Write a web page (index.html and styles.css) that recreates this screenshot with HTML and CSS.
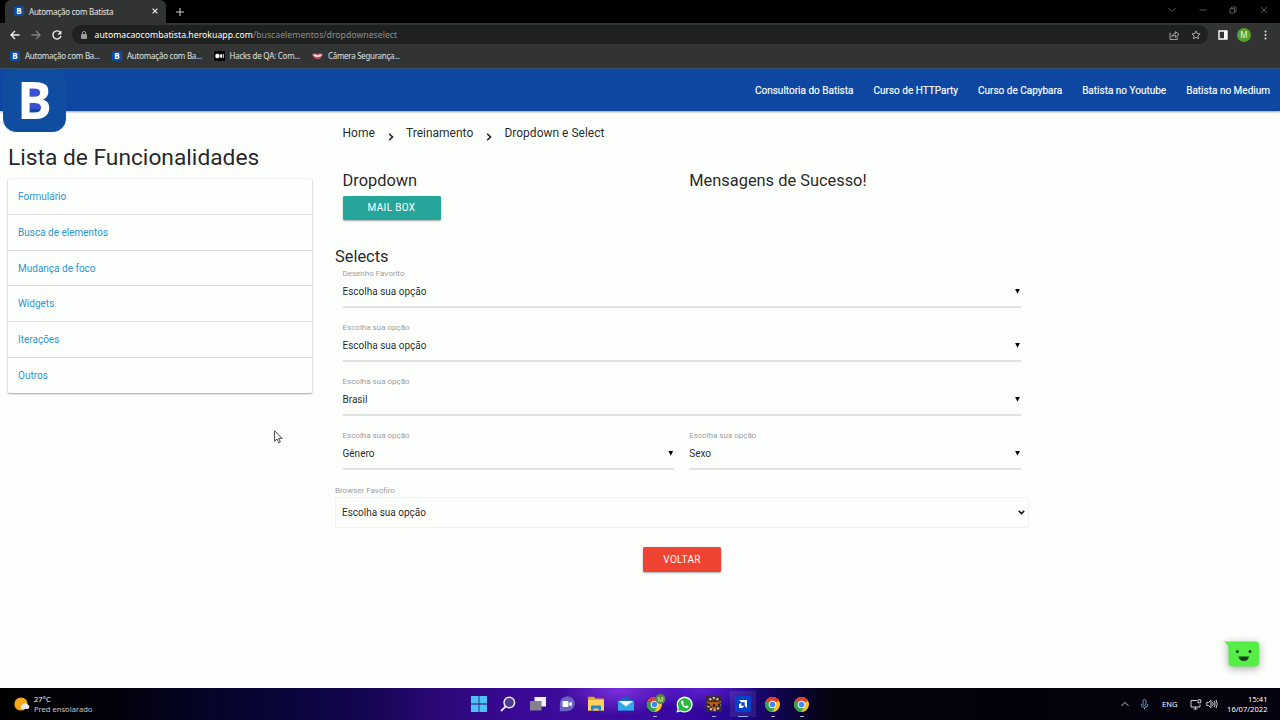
FILE: index.html
```html
<!DOCTYPE html>
<html lang="pt-BR">
<head>
<meta charset="utf-8">
<title>Automação com Batista</title>
<link rel="stylesheet" href="styles.css">
</head>
<body>
<svg class="defs" width="0" height="0">
  <symbol id="chrome" viewBox="0 0 16 16">
    <circle cx="8" cy="8" r="8" fill="#fbc31c"/>
    <path d="M8 8 1.1 4A8 8 0 0 1 14.9 4Z" fill="#e2412f"/>
    <path d="M1.1 4A8 8 0 0 0 7.6 16L11.4 10 8 8Z" fill="#31a350"/>
    <path d="M1.1 4 4.8 10 8 8 8 4.2Z" fill="#31a350"/>
    <path d="M1.1 4A8 8 0 0 1 14.9 4L8 4.2 4.6 6.3Z" fill="#e2412f"/>
    <circle cx="8" cy="8" r="4" fill="#fff"/>
    <circle cx="8" cy="8" r="3" fill="#4285f4"/>
  </symbol>
</svg>

<header class="tabs">
  <div class="tab">
    <span class="fav">B</span>
    <span class="tab-title">Automação com Batista</span>
    <svg width="6" height="6" viewBox="0 0 6 6" stroke="#e8e8e8" stroke-width="1.2"><path d="M.6.6l4.8 4.8M5.4.6L.6 5.4"/></svg>
  </div>
  <svg class="plus" width="8" height="8" viewBox="0 0 8 8" stroke="#c8c8c8" stroke-width="1.1"><path d="M4 0v8M0 4h8"/></svg>
  <div class="window-controls">
    <svg width="8" height="8" viewBox="0 0 8 8"><path d="M.5 2 4 5.6 7.5 2"/></svg>
    <svg width="8" height="8" viewBox="0 0 8 8"><path d="M.5 4h7"/></svg>
    <svg width="8" height="8" viewBox="0 0 8 8"><path d="M1 2.5h4.5V7H1zM2.5 2.5V1H7v4.5H5.5"/></svg>
    <svg width="8" height="8" viewBox="0 0 8 8"><path d="M1 1l6 6M7 1 1 7"/></svg>
  </div>
</header>

<div class="toolbar">
  <svg width="10" height="10" viewBox="0 0 10 10" class="nav-ic"><path d="M9.6 5H1.2M5 1 1 5l4 4"/></svg>
  <svg width="10" height="10" viewBox="0 0 10 10" class="nav-ic dim"><path d="M.4 5h8.4M5 1l4 4-4 4"/></svg>
  <svg width="10" height="10" viewBox="0 0 10 10" class="nav-ic"><path d="M8.3 2.4A4.1 4.1 0 1 0 9 6"/><path d="M9.4.4v4H5.4z" fill="#f0f0f0" stroke="none"/></svg>
  <div class="address">
    <svg width="6" height="8" viewBox="0 0 6 8"><rect y="3" width="6" height="5" rx=".8" fill="#9a9d9b"/><path d="M1.4 3.2V2a1.6 1.6 0 0 1 3.2 0v1.2" fill="none" stroke="#9a9d9b"/></svg>
    <span class="url"><span class="host">automacaocombatista.herokuapp.com</span><span class="path">/buscaelementos/dropdowneselect</span></span>
    <svg width="11" height="10" viewBox="0 0 11 10" class="thin"><path d="M1 2.6V9.4h7.4V7.6M2.8 6.8C3 4.6 4.6 3.6 6.6 3.6V1.6L10 4.6 6.6 7.4V5.4C5 5.4 3.8 5.6 2.8 6.8Z"/></svg>
    <svg width="10" height="10" viewBox="0 0 10 10" class="thin star"><path d="M5 .9 6.2 3.6l2.9.3-2.2 2 .6 2.9L5 7.3 2.5 8.8l.6-2.9-2.2-2 2.9-.3Z"/></svg>
  </div>
  <svg width="10" height="10" viewBox="0 0 10 10" class="panel"><path d="M1 1h8v8H1z" fill="none" stroke="#fff" stroke-width="1.4"/><path d="M6 1h3v8H6z" fill="#fff"/></svg>
  <span class="avatar">M</span>
  <svg width="3" height="10" viewBox="0 0 3 10" fill="#e4e4e4"><circle cx="1.5" cy="1.4" r="1"/><circle cx="1.5" cy="5" r="1"/><circle cx="1.5" cy="8.6" r="1"/></svg>
</div>

<div class="bookmarks">
  <div class="bm bm1"><span class="fav">B</span><span>Automação com Ba...</span></div>
  <div class="bm bm2"><span class="fav">B</span><span>Automação com Ba...</span></div>
  <div class="bm bm3"><svg width="11" height="10" viewBox="0 0 11 10"><path d="M0 0h11v10H0z" fill="#000"/><circle cx="3.4" cy="5" r="2.2" fill="#fff"/><ellipse cx="7.2" cy="5" rx="1.2" ry="2.1" fill="#fff"/><path d="M9 3h.7v4H9z" fill="#fff"/></svg><span>Hacks de QA: Com...</span></div>
  <div class="bm bm4"><svg width="11" height="10" viewBox="0 0 11 10"><path d="M.3 3.2Q2.4 1.6 5.5 3 8.6 1.6 10.7 3.2 10 7.6 5.5 8.2 1 7.6.3 3.2Z" fill="#c14b62"/><path d="M.6 3.4 4 3.6l1.5 1 1.5-1 3.4-.2-2 2-2.9.6-2.9-.6Z" fill="#f4e4e8"/></svg><span>Câmera Segurança...</span></div>
</div>

<div class="page">
  <nav class="navbar">
    <a>Consultoria do Batista</a><a>Curso de HTTParty</a><a>Curso de Capybara</a><a>Batista no Youtube</a><a>Batista no Medium</a>
    <div class="logo"><span class="logo-b">B</span></div>
  </nav>
  <div class="columns">
    <aside class="sidebar">
      <h4>Lista de Funcionalidades</h4>
      <ul class="collection">
        <li>Formulário</li><li>Busca de elementos</li><li>Mudança de foco</li><li>Widgets</li><li>Iterações</li><li>Outros</li>
      </ul>
    </aside>
    <main class="content">
      <div class="breadcrumb">
        <span>Home</span>
        <svg width="6" height="8" viewBox="0 0 6 8"><path d="M1.2.8 4.5 4 1.2 7.2"/></svg>
        <span>Treinamento</span>
        <svg width="6" height="8" viewBox="0 0 6 8"><path d="M1.2.8 4.5 4 1.2 7.2"/></svg>
        <span>Dropdown e Select</span>
      </div>
      <div class="row top">
        <div class="col"><h5>Dropdown</h5><a class="btn teal">MAIL BOX</a></div>
        <div class="col"><h5>Mensagens de Sucesso!</h5></div>
      </div>
      <h5 class="selects-title">Selects</h5>
      <div class="row"><div class="field"><label>Desenho Favorito</label><div class="input"><span>Escolha sua opção</span><i></i></div></div></div>
      <div class="row"><div class="field"><label>Escolha sua opção</label><div class="input"><span>Escolha sua opção</span><i></i></div></div></div>
      <div class="row"><div class="field"><label>Escolha sua opção</label><div class="input"><span>Brasil</span><i></i></div></div></div>
      <div class="row">
        <div class="field"><label>Escolha sua opção</label><div class="input"><span>Gênero</span><i></i></div></div>
        <div class="field"><label>Escolha sua opção</label><div class="input"><span>Sexo</span><i></i></div></div>
      </div>
      <label class="browser-label">Browser Favofiro</label>
      <div class="browser-select"><span>Escolha sua opção</span><svg width="7" height="5" viewBox="0 0 7 5"><path d="M.8.9 3.5 3.6 6.2.9" fill="none" stroke="#111" stroke-width="1.5"/></svg></div>
      <div class="actions"><a class="btn red">VOLTAR</a></div>
    </main>
  </div>
  <svg class="cursor" width="9" height="14" viewBox="0 0 9 14"><path d="M.6.8v10.4L3 9l1.7 3.8 1.7-.8-1.7-3.6h3.4Z" fill="#fff" stroke="#333" stroke-width=".9"/></svg>
  <svg class="chat" width="54" height="52" viewBox="0 0 54 52"><path d="M8 10.5H36.5a3.5 3.5 0 0 1 3.500 3.500V32a3.500 3.500 0 0 1-3.500 3.500H13A3.500 3.500 0 0 1 9.500 32V16Q8.500 13 5 10.500Z" fill="#55ee46"/><circle cx="18.400" cy="20.500" r="1.500" fill="#173a1b"/><circle cx="31" cy="20.500" r="1.500" fill="#173a1b"/><path d="M19.500 25.500h10.500q-1 4.500-5.200 4.500t-5.300-4.500Z" fill="#173a1b"/></svg>
</div>

<footer class="taskbar">
  <div class="weather">
    <svg width="16" height="15" viewBox="0 0 16 15"><circle cx="7" cy="7" r="6.600" fill="#f5a81c"/><path d="M8.500 12a2.200 2.200 0 0 1 0-4.300 3 3 0 0 1 5-.2 2.300 2.300 0 0 1 .2 4.500Z" fill="#e9e9ee"/></svg>
    <div><span class="w1">27°C</span><span class="w2">Pred ensolarado</span></div>
  </div>
  <div class="apps">
    <div><svg width="16" height="16" viewBox="0 0 16 16"><path d="M0 0h7.600v7.600H0zM8.400 0H16v7.600H8.400zM0 8.400h7.600V16H0zM8.400 8.400H16V16H8.400z" fill="#4cc2f5"/></svg></div>
    <div><svg width="16" height="16" viewBox="0 0 16 16"><circle cx="9.300" cy="6.500" r="5.300" fill="#4e3a97" stroke="#eee6fa" stroke-width="1.500"/><path d="M5.500 10.500 1.500 14.600" stroke="#eee6fa" stroke-width="1.800" stroke-linecap="round"/></svg></div>
    <div><svg width="16" height="16" viewBox="0 0 16 16"><path d="M4.500 1H16v9.500H4.500z" fill="#f3effb"/><path d="M0 5h11.500v9.500H0z" fill="#858190"/></svg></div>
    <div><svg width="16" height="16" viewBox="0 0 16 16"><path d="M.8 15.200V8A7.500 7.500 0 1 1 8.500 15.200Z" fill="#6863c3"/><rect x="3.500" y="5" width="6" height="6" rx="1" fill="#fff"/><path d="m10.200 7 2.500-1.500v5L10.200 9Z" fill="#fff"/></svg></div>
    <div><svg width="16" height="16" viewBox="0 0 16 16"><path d="M0 1.500q0-.8.8-.8h5L7.500 2.500H15q1 0 1 1V14.500H0Z" fill="#e9a82a"/><path d="M0 4h16v10.500H0z" fill="#ffd05a"/><path d="M3 14.500V10.500q0-1 1-1h8q1 0 1 1v4h-2.500v-2h-5v2Z" fill="#2584d0"/></svg></div>
    <div><svg width="16" height="16" viewBox="0 0 16 16"><path d="M0 5 8 0l8 5v9.500H0z" fill="#1666b5"/><path d="M0 5h16v9.500H0z" fill="#30a9e8"/><path d="M1 5h14L8 10.500Z" fill="#f3fbff"/></svg></div>
    <div class="run"><svg width="22" height="20" viewBox="0 0 22 20"><use href="#chrome" x="3" y="3" width="15" height="15"/><circle cx="16.500" cy="5" r="5" fill="#568a38"/><text x="16.500" y="7.600" class="badge">M</text></svg></div>
    <div><svg width="17" height="17" viewBox="0 0 17 17"><path d="M.4 16.600 1.600 12.400A8 8 0 1 1 4.600 15.500Z" fill="#fff"/><path d="m2 15 .9-3A6.600 6.600 0 1 1 5 14.200Z" fill="#2cb742"/><path d="M6 4.600q-1.500.9-.9 2.600 1.500 3.900 5.400 5 1.800 0 2.200-2L10.600 9.200 9.600 10.400Q7.800 9.600 7 7.900L7.800 7 7 4.800Z" fill="#fff"/></svg></div>
    <div class="run"><svg width="16" height="16" viewBox="0 0 16 16"><path d="M0 0h16v16H0z" fill="#3b2a33"/><circle cx="8" cy="8" r="6" fill="#5b3722" stroke="#d7ccc5" stroke-width="2" stroke-dasharray="2 1.770"/><path d="M1.500 5.500h13v4.500h-13z" fill="#3b1e0c"/><path d="M2.500 7h11M4 9h3M9 9h3M6 12h4" stroke="#d87223" stroke-width="1.400"/></svg></div>
    <div class="run active"><svg width="16" height="16" viewBox="0 0 16 16"><path d="M0 0h16v16H0z" fill="#0641c9"/><path d="M4 4h8v8L9.700 9.700V6.300H6.300ZM4 8.600 6.300 6.600v3.100h3.100L7.400 12H4Z" fill="#fff"/></svg></div>
    <div class="run"><svg width="15" height="15"><use href="#chrome"/></svg></div>
    <div class="run"><svg width="15" height="15"><use href="#chrome"/></svg></div>
  </div>
  <div class="tray">
    <svg width="8" height="6" viewBox="0 0 8 6" class="tr"><path d="M.6 4.800 4 1.400l3.400 3.400"/></svg>
    <svg width="9" height="11" viewBox="0 0 9 11" class="mic"><rect x="3" y=".5" width="3" height="6" rx="1.500"/><path d="M1 5a3.500 3.500 0 0 0 7 0M4.500 8.500v2"/></svg>
    <span class="lang">ENG</span>
    <svg width="12" height="11" viewBox="0 0 12 11" class="tr"><path d="M7 1.500H1v6.500h9V5.500M3.500 10h4M5.500 8v2M8 .8h2.800v3H8z"/></svg>
    <svg width="12" height="10" viewBox="0 0 12 10" class="tr"><path d="M.8 3.500h1.700L5 1.300v7.400L2.500 6.500H.8ZM6.500 3.200q1.200 1.800 0 3.600M8.200 2q2 3 0 6M10 .9q2.600 4.100 0 8.200"/></svg>
    <div class="clock"><span>15:41</span><span>16/07/2022</span></div>
  </div>
</footer>
</body>
</html>
```
FILE: styles.css
```css
* { box-sizing: border-box; }
body {
  margin: 0; width: 1280px; height: 720px; overflow: hidden;
  display: flex; flex-direction: column;
  font-family: Roboto, "Liberation Sans", sans-serif;
  font-size: 10px; color: rgba(0,0,0,.87); background: #fdfffd;
}
svg { display: block; flex: none; }
.defs { position: absolute; }
h4, h5 { margin: 0; font-weight: 400; }

/* browser chrome */
.tabs, .toolbar, .bookmarks, .taskbar { font-family: "Noto Sans", "Open Sans", sans-serif; font-size: 8px; white-space: nowrap; }
.fav { flex: none; width: 10px; height: 10px; border-radius: 2px; background: #0d4da3; color: #fff; font: 700 8px/10px "Open Sans", sans-serif; letter-spacing: 0; text-align: center; }
.tabs { height: 23px; background: #000; display: flex; align-items: center; padding-left: 5px; }
.tab { width: 161px; height: 23px; background: #323433; border-radius: 6px 6px 0 0; display: flex; align-items: center; padding: 0 8px 1px 9px; color: #e6e8e6; }
.tab-title { margin-left: 5px; flex: 1; letter-spacing: -.230px; }
.plus { margin-left: 10px; }
.window-controls { margin-left: auto; display: flex; gap: 22.700px; padding: 0 12px 3px 0; }
.window-controls path { fill: none; stroke: #686868; stroke-width: .8; }
.toolbar { height: 23px; background: #323433; display: flex; align-items: center; padding: 0 13px 0 10px; }
.nav-ic { margin-right: 11px; fill: none; stroke: #f0f0f0; stroke-width: 1.300; }
.nav-ic.dim { stroke: #808280; }
.address { width: 1136px; height: 19px; margin-left: -1px; border-radius: 10px; background: #1e2120; display: flex; align-items: center; padding: 0 7px 0 9px; }
.url { flex: 1; margin-left: 7.500px; font-size: 8.700px; letter-spacing: .015px; }
.host { color: #fff; }
.path { color: #8b8e8c; }
.thin { fill: none; stroke: #b9bbba; stroke-width: .9; }
.star { margin-left: 11px; }
.panel { margin-left: 10px; }
.avatar { width: 14px; height: 14px; margin: 0 13px 0 9px; border-radius: 50%; background: #5aa02c; color: #e8f4dc; text-align: center; line-height: 14px; font-size: 8px; }
.bookmarks { height: 22px; background: #323433; display: flex; align-items: center; padding: 0 0 3px 10px; color: #e0e2e0; }
.bm { display: flex; align-items: center; gap: 5px; letter-spacing: -.240px; }
.bm1 { width: 102px; }
.bm2 { width: 101.500px; }
.bm3 { width: 98.500px; }
.bm4 { letter-spacing: -.300px; }

/* web page */
.page { position: relative; height: 620px; }
.navbar { position: relative; height: 43px; background: #0d47a1; box-shadow: 0 1px 2px rgba(0,0,30,.4); border-top: 1px solid #3b5472; display: flex; justify-content: flex-end; align-items: center; gap: 20px; padding: 0 10px 0 0; color: #fff; -webkit-text-stroke: .15px #fff; }
.logo { position: absolute; left: 3px; top: 0; width: 63px; height: 63px; border: 1px solid #1350a4; border-radius: 13px; display: flex; align-items: flex-start; justify-content: center;
  background: linear-gradient(#3b4fd6, #3b4fd6) 24px 17px / 14px 22px no-repeat #0e4da0; }
.logo-b { font: 700 52px/57px "Open Sans", sans-serif; -webkit-text-stroke: 0; }
.columns { display: flex; }
.sidebar { width: 320px; padding: 30px 7px 0 8px; }
.sidebar h4 { font-size: 22.750px; line-height: 33px; }
.collection { list-style: none; margin: 5.300px 0 0; padding: 0; width: 304px; border-radius: 1px; box-shadow: 0 1px 2px rgba(0,0,0,.35), 0 0 1px rgba(0,0,0,.25); }
.collection li { height: 35.700px; line-height: 36px; padding-left: 10px; color: #2c95d2; border-bottom: 1px solid #dfe1df; }
.collection li:last-child { border-bottom: 0; }
.content { width: 709px; padding: 14px 0 0 15px; }
.breadcrumb { display: flex; align-items: flex-start; height: 43px; padding-left: 7.500px; font-size: 12px; line-height: 16px; }
.breadcrumb svg { margin: 8px 12px 0 13.200px; }
.breadcrumb path { fill: none; stroke: #222; stroke-width: 1.600; }
.row { display: flex; gap: 15px; padding: 0 8px 0 7.500px; }
.row.top { height: 77px; }
.col { flex: 1; }
h5 { font-size: 16.400px; line-height: 26px; }
.btn { display: block; border-radius: 1.500px; color: #fff; text-align: center; box-shadow: 0 1px 2px rgba(0,0,0,.35); letter-spacing: .330px; }
.teal { width: 98px; height: 24px; line-height: 24px; margin-top: 2px; background: #26a69a; font-size: 10px; }
.selects-title { height: 24px; line-height: 23px; }
.field { flex: 1; height: 54px; }
.field label, .browser-label { display: block; font-size: 8px; line-height: 10px; color: #9e9e9e; }
.input { height: 29px; border-bottom: 2px solid #e1e3e1; padding-bottom: 2.500px; display: flex; justify-content: space-between; line-height: 17px; align-items: center; }
.input i { width: 5px; height: 5px; margin-right: 1px; background: #000; clip-path: polygon(0 0,100% 0,50% 100%); }
.browser-label { margin-top: 1px; }
.browser-select { width: 694px; height: 31px; margin-top: 1px; border: 1px solid #f1f2f1; display: flex; align-items: center; justify-content: space-between; padding: 0 3px 0 6px; }
.actions { display: flex; justify-content: center; padding-top: 19px; }
.red { width: 78px; height: 25px; line-height: 25px; background: #f04432; }
.cursor { position: absolute; left: 274px; top: 362px; }
.chat { position: absolute; left: 1219px; top: 562.500px; filter: drop-shadow(0 2px 4px rgba(0,0,0,.35)); }

/* taskbar */
.taskbar { height: 32px; display: flex; align-items: center; color: #fff;
  background:
    radial-gradient(ellipse 60px 26px at 620px 2px, #7c2fe0 0, rgba(100,30,210,0) 100%),
    radial-gradient(ellipse 60px 20px at 700px 2px, #5b1fd0 0, rgba(90,30,200,0) 100%),
    linear-gradient(90deg, #000 0, #02020c 120px, #050426 200px, #09063c 290px, #160553 370px, #2b0878 440px, #3a0a96 520px, #3c0b9c 600px, #3807a2 680px, #22068a 740px, #0d0440 790px, #04030e 830px, #03020c 1000px, #03020e 1280px); }
.weather { width: 464.400px; display: flex; align-items: center; padding-left: 14px; gap: 4px; }
.weather div { display: flex; flex-direction: column; line-height: 10.500px; font-size: 7.600px; }
.w2 { color: #c6c7cf; }
.apps { width: 352px; display: flex; height: 32px; }
.apps div { flex: 1; height: 32px; display: flex; justify-content: center; align-items: center; position: relative; }
.apps .run::after { content: ""; position: absolute; left: 13px; bottom: 3px; width: 4px; height: 1.500px; background: #b9b3cf; border-radius: 1px; }
.apps .active { background: linear-gradient(rgba(255,255,255,.08), rgba(255,255,255,.08)) center / 26px 26px no-repeat; }
.apps .active::after { left: 9.500px; width: 10px; background: #86b4f5; }
.badge { font: 7px "Noto Sans", sans-serif; fill: #d7ebc8; text-anchor: middle; }
.tray { flex: 1; display: flex; align-items: center; justify-content: flex-end; padding-right: 12.500px; font-size: 7.600px; }
.tr { fill: none; stroke: #e6e6ea; stroke-width: .9; }
.mic { fill: none; stroke: #6aa6d8; stroke-width: .9; margin: 0 13px 0 11px; }
.lang { margin-right: 12px; }
.tray .tr + .tr { margin-left: 4px; }
.clock { width: 46px; margin-left: 4px; display: flex; flex-direction: column; text-align: right; line-height: 10.500px; }
```
